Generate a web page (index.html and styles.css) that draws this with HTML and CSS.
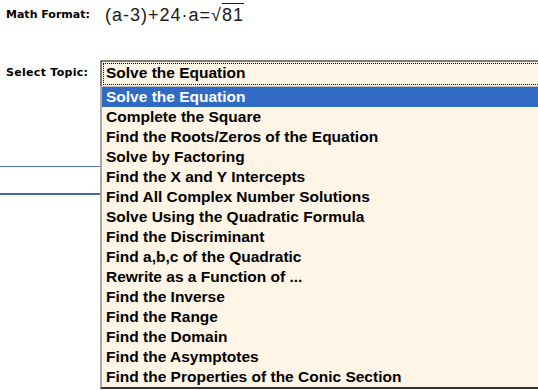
FILE: index.html
```html
<!DOCTYPE html>
<html lang="en">
  <head>
    <meta charset="UTF-8" />
    <meta name="viewport" content="width=device-width, initial-scale=1.0" />
    <link rel="stylesheet" href="styles.css">
    <title>Select Topic</title>
  </head>
  <body>
    <!-- 式の表示 -->
    <div class="math-row">
      <div class="label math-label">Math Format:</div>
      <div class="formula">(a-3)+24·a=√<span class="radicand">81</span></div>
    </div>

    <!-- トピック選択 -->
    <div class="topic-row">
      <div class="label topic-label">Select Topic:</div>
      <div class="select-box">
        <div class="focus-ring">Solve the Equation</div>
      </div>
    </div>

    <div class="dropdown-area">
      <div class="side">
        <div class="line-thin"></div>
        <div class="line-thick"></div>
      </div>
      <ul class="topic-list">
        <li class="selected">Solve the Equation</li>
        <li>Complete the Square</li>
        <li>Find the Roots/Zeros of the Equation</li>
        <li>Solve by Factoring</li>
        <li>Find the X and Y Intercepts</li>
        <li>Find All Complex Number Solutions</li>
        <li>Solve Using the Quadratic Formula</li>
        <li>Find the Discriminant</li>
        <li>Find a,b,c of the Quadratic</li>
        <li>Rewrite as a Function of ...</li>
        <li>Find the Inverse</li>
        <li>Find the Range</li>
        <li>Find the Domain</li>
        <li>Find the Asymptotes</li>
        <li>Find the Properties of the Conic Section</li>
      </ul>
    </div>
  </body>
</html>
```

FILE: styles.css
```css
/* 基本設定 */
* {
  margin: 0;
  padding: 0;
  box-sizing: border-box;
}

html,
body {
  overflow: hidden;
}

body {
  background-color: #fff;
  color: #000;
  width: 538px;
  height: 390px;
}

.label {
  font-family: "DejaVu Sans", Verdana, sans-serif;
  font-weight: bold;
  font-size: 11px;
  line-height: 13px;
  color: #000;
  padding-left: 6px;
}

/* 式 */
.math-row {
  display: flex;
  align-items: flex-start;
  height: 60px;
}

.math-label {
  width: 105px;
  margin-top: 8px;
}

.formula {
  margin-top: 5px;
  font-family: "Liberation Sans", Arial, sans-serif;
  font-size: 18px;
  line-height: 20px;
  letter-spacing: 1px;
  color: #1a1a1a;
}

.radicand {
  border-top: 1px solid #1a1a1a;
  padding-top: 1px;
}

/* セレクトボックス */
.topic-row {
  display: flex;
  align-items: flex-start;
  height: 26px;
}

.topic-label {
  width: 100px;
  margin-top: 6px;
  letter-spacing: 0.3px;
}

.select-box {
  flex: 1;
  height: 26px;
  background-color: #fef5e7;
  border-top: 2px solid #808080;
  border-left: 2px solid #808080;
  padding: 1px 0 1px 1px;
}

.focus-ring {
  height: 22px;
  border: 1px dotted #000;
  border-right: none;
  padding-left: 2px;
  font-family: "Liberation Sans", Arial, sans-serif;
  font-weight: bold;
  font-size: 15.5px;
  line-height: 18px;
}

/* ドロップダウン */
.dropdown-area {
  display: flex;
  align-items: flex-start;
}

.side {
  width: 100px;
  flex-shrink: 0;
}

.line-thin {
  margin-top: 80px;
  height: 1px;
  background-color: #5275bd;
}

.line-thick {
  margin-top: 26px;
  height: 2px;
  background-color: #4566aa;
}

.topic-list {
  flex: 1;
  list-style: none;
  background-color: #fef5e7;
  border-top: 1px solid #c0c0c0;
  border-left: 2px solid #a8a8a8;
  border-bottom: 2px solid #303030;
  font-family: "Liberation Sans", Arial, sans-serif;
  font-weight: bold;
  font-size: 15.5px;
}

.topic-list li {
  height: 20px;
  line-height: 20px;
  padding-left: 4px;
  white-space: nowrap;
}

.topic-list li.selected {
  background-color: #316ac5;
  color: #fff;
}
```
